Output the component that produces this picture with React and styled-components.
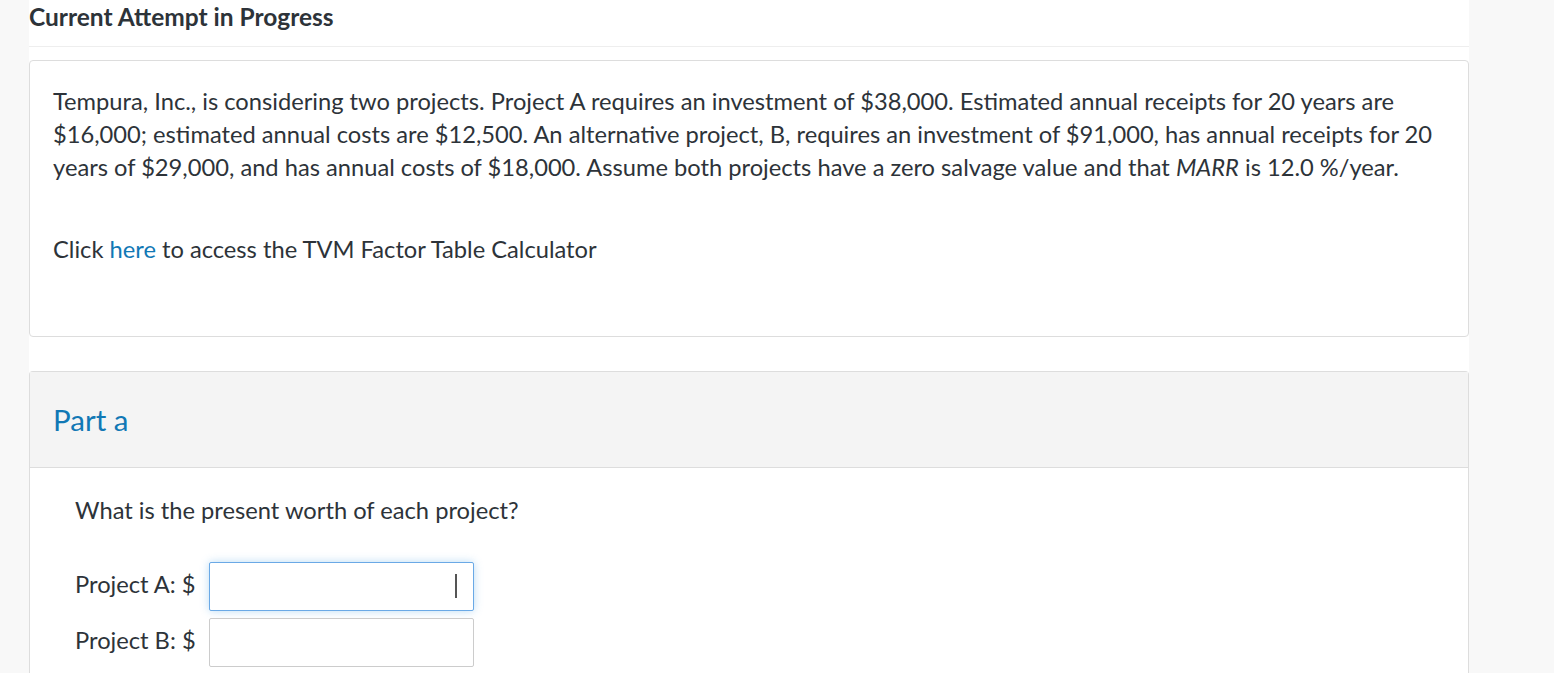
import styled, { createGlobalStyle } from "styled-components"

const GlobalStyle = createGlobalStyle`
  html, body {
    margin: 0;
    padding: 0;
    background: #f8f8f8;
  }
  body {
    font-family: Lato, "Open Sans", sans-serif;
    color: #333;
  }
`

const Page = styled.div`
  display: flex;
  padding-left: 29px;
  height: 673px;
  overflow: hidden;
`

const Main = styled.main`
  width: 1440px;
  background: #fff;
  display: flex;
  flex-direction: column;
`

const Title = styled.h2`
  margin: 0;
  font-size: 24.5px;
  font-weight: 700;
  line-height: 34px;
  padding-bottom: 12px;
  border-bottom: 1px solid #eee;
  color: #2d3339;
`

const QuestionCard = styled.section`
  margin-top: 13px;
  border: 1px solid #ddd;
  border-radius: 4px;
  padding: 24px 23px 70px;
  font-size: 23.7px;
  line-height: 33px;
  color: #2d3339;
`

const Paragraph = styled.p`
  margin: 0 0 ${p => p.$gap || 0}px;
`

const NoWrap = styled.span`
  white-space: nowrap;
`

const Link = styled.a`
  color: #1178b5;
  text-decoration: none;
`

const PartPanel = styled.section`
  margin-top: 34px;
  border: 1px solid #ddd;
  border-bottom: none;
  border-radius: 4px 4px 0 0;
  flex: 1;
`

const PartHeader = styled.div`
  background: #f4f4f4;
  border-bottom: 1px solid #ddd;
  height: 95px;
  display: flex;
  align-items: center;
  padding: 0 23px;
  font-size: 29.5px;
  color: #1178b5;
`

const PartBody = styled.div`
  padding: 27px 45px;
  font-size: 23.7px;
  color: #2d3339;
`

const Prompt = styled.p`
  margin: 0 0 37px;
  line-height: 30px;
`

const AnswerRow = styled.div`
  display: flex;
  align-items: center;
  gap: 13px;
  margin-bottom: 7px;
`

const Label = styled.label`
  min-width: 121px;
  padding-bottom: 5px;
`

const InputWrap = styled.div`
  position: relative;
`

const Input = styled.input`
  box-sizing: border-box;
  width: 265px;
  height: 49px;
  border: 1px solid ${p => (p.$focused ? "#6aa9e6" : "#ccc")};
  border-radius: 2px;
  box-shadow: ${p => (p.$focused ? "0 0 8px rgba(102, 175, 233, 0.45)" : "none")};
  outline: none;
  font-family: inherit;
  font-size: 20px;
  text-align: right;
  padding: 0 16px;
`

const Caret = styled.span`
  position: absolute;
  left: 246px;
  top: 12px;
  width: 2px;
  height: 24px;
  background: #555;
`

export default function App() {
  return (
    <>
      <GlobalStyle />
      <Page>
        <Main>
          <Title>Current Attempt in Progress</Title>
          <QuestionCard>
            <Paragraph $gap={49}>
              Tempura, Inc., is considering two projects. Project A requires an investment of $38,000. Estimated annual receipts for 20 years are $16,000; estimated annual costs are $12,500. An alternative project, B, requires an investment of $91,000, has annual receipts for 20 years of $29,000, and has annual costs of $18,000. Assume both projects have a zero salvage value and that <i>MARR</i> is <NoWrap>12.0&#8239;%/year.</NoWrap>
            </Paragraph>
            <Paragraph>
              Click <Link href="#">here</Link> to access the TVM Factor Table Calculator
            </Paragraph>
          </QuestionCard>
          <PartPanel>
            <PartHeader>Part a</PartHeader>
            <PartBody>
              <Prompt>What is the present worth of each project?</Prompt>
              <AnswerRow>
                <Label>Project A: $</Label>
                <InputWrap>
                  <Input $focused type="text" />
                  <Caret />
                </InputWrap>
              </AnswerRow>
              <AnswerRow>
                <Label>Project B: $</Label>
                <InputWrap>
                  <Input type="text" />
                </InputWrap>
              </AnswerRow>
            </PartBody>
          </PartPanel>
        </Main>
      </Page>
    </>
  )
}
